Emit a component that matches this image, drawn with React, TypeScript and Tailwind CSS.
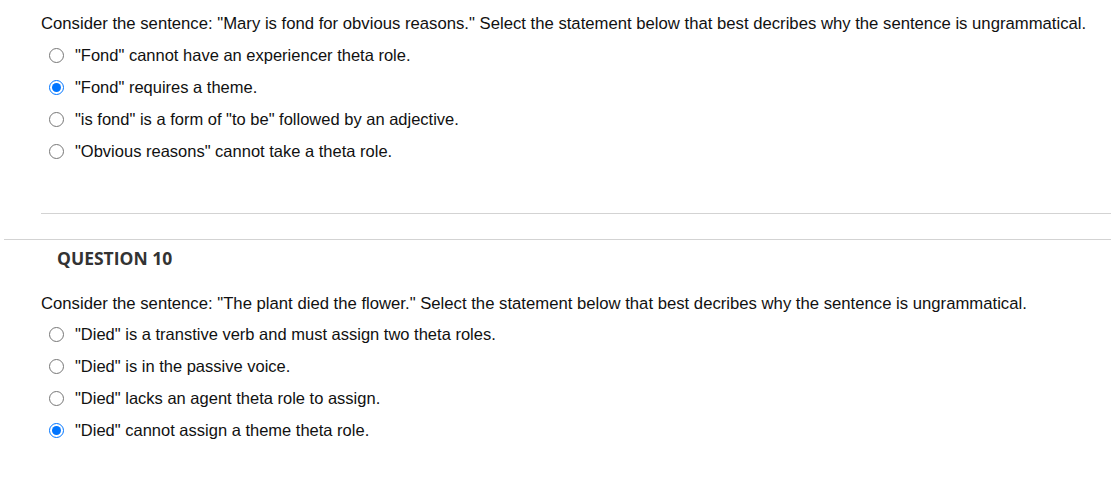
const q1 = {
  prompt:
    'Consider the sentence: "Mary is fond for obvious reasons." Select the statement below that best decribes why the sentence is ungrammatical.',
  options: [
    '"Fond" cannot have an experiencer theta role.',
    '"Fond" requires a theme.',
    '"is fond" is a form of "to be" followed by an adjective.',
    '"Obvious reasons" cannot take a theta role.',
  ],
  answer: 1,
}

const q2 = {
  prompt:
    'Consider the sentence: "The plant died the flower." Select the statement below that best decribes why the sentence is ungrammatical.',
  options: [
    '"Died" is a transtive verb and must assign two theta roles.',
    '"Died" is in the passive voice.',
    '"Died" lacks an agent theta role to assign.',
    '"Died" cannot assign a theme theta role.',
  ],
  answer: 3,
}

function Options({ name, options, answer }: { name: string; options: string[]; answer: number }) {
  return (
    <ul className="pl-[8px]">
      {options.map((opt, i) => (
        <li key={i} className="flex items-center h-[32px]">
          <input
            type="radio"
            name={name}
            checked={i === answer}
            readOnly
            className="w-[15px] h-[15px] m-0 accent-[#0075ff]"
          />
          <span className="ml-[11px] text-[16.5px] leading-[19px] text-[#111]">{opt}</span>
        </li>
      ))}
    </ul>
  )
}

export default function App() {
  return (
    <div className="w-[1111px] h-[487px] bg-white overflow-hidden" style={{ fontFamily: '"Liberation Sans", Arial, sans-serif' }}>
      <div className="pl-[41px] pt-[14px]">
        <p className="text-[16.7px] leading-[19px] text-[#111] mb-[6px]">{q1.prompt}</p>
        <Options name="q9" options={q1.options} answer={q1.answer} />
        <div className="mt-[46px] border-t border-[#d3d3d3]" />
      </div>
      <div className="ml-[4px] mt-[25px] border-t border-[#d3d3d3]" />
      <h2
        className="pl-[57px] mt-[7px] text-[17.5px] leading-[22px] font-bold text-[#333]"
        style={{ fontFamily: '"Open Sans", sans-serif' }}
      >
        QUESTION 10
      </h2>
      <div className="pl-[41px] mt-[25px]">
        <p className="text-[16.7px] leading-[19px] text-[#111] mb-[5px]">{q2.prompt}</p>
        <Options name="q10" options={q2.options} answer={q2.answer} />
      </div>
    </div>
  )
}
